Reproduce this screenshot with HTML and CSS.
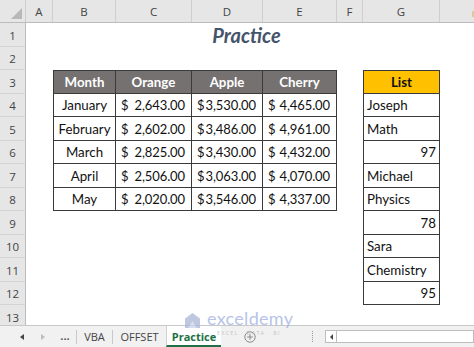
FILE: index.html
```html
<!DOCTYPE html>
<html lang="en">
<head>
    <meta charset="UTF-8">
    <meta name="viewport" content="width=device-width, initial-scale=1.0">
    <title>Practice - Excel</title>
    <link rel="stylesheet" href="styles.css">
</head>
<body>
    <div class="page">
        <div class="sheet">
            <div class="row head">
                <div class="corner"><span class="tri"></span></div>
                <div class="ch">A</div>
                <div class="ch">B</div>
                <div class="ch">C</div>
                <div class="ch">D</div>
                <div class="ch">E</div>
                <div class="ch">F</div>
                <div class="ch">G</div>
                <div class="ch last"><span class="sel"></span></div>
            </div>

            <div class="row">
                <div class="rh">1</div>
                <div class="title">Practice</div>
            </div>
            <div class="row">
                <div class="rh">2</div>
            </div>
            <div class="row">
                <div class="rh">3</div>
                <div class="tc th first">Month</div>
                <div class="tc th">Orange</div>
                <div class="tc th">Apple</div>
                <div class="tc th">Cherry</div>
                <div class="lc lh">List</div>
            </div>
            <div class="row">
                <div class="rh">4</div>
                <div class="tc first">January</div>
                <div class="tc money"><span>$</span><span>2,643.00</span></div>
                <div class="tc money"><span>$</span><span>3,530.00</span></div>
                <div class="tc money"><span>$</span><span>4,465.00</span></div>
                <div class="lc">Joseph</div>
            </div>
            <div class="row">
                <div class="rh">5</div>
                <div class="tc first">February</div>
                <div class="tc money"><span>$</span><span>2,602.00</span></div>
                <div class="tc money"><span>$</span><span>3,486.00</span></div>
                <div class="tc money"><span>$</span><span>4,961.00</span></div>
                <div class="lc">Math</div>
            </div>
            <div class="row">
                <div class="rh">6</div>
                <div class="tc first">March</div>
                <div class="tc money"><span>$</span><span>2,825.00</span></div>
                <div class="tc money"><span>$</span><span>3,430.00</span></div>
                <div class="tc money"><span>$</span><span>4,432.00</span></div>
                <div class="lc num">97</div>
            </div>
            <div class="row">
                <div class="rh">7</div>
                <div class="tc first">April</div>
                <div class="tc money"><span>$</span><span>2,506.00</span></div>
                <div class="tc money"><span>$</span><span>3,063.00</span></div>
                <div class="tc money"><span>$</span><span>4,070.00</span></div>
                <div class="lc">Michael</div>
            </div>
            <div class="row">
                <div class="rh">8</div>
                <div class="tc first">May</div>
                <div class="tc money"><span>$</span><span>2,020.00</span></div>
                <div class="tc money"><span>$</span><span>3,546.00</span></div>
                <div class="tc money"><span>$</span><span>4,337.00</span></div>
                <div class="lc">Physics</div>
            </div>
            <div class="row">
                <div class="rh">9</div>
                <div class="lc num">78</div>
            </div>
            <div class="row">
                <div class="rh">10</div>
                <div class="lc">Sara</div>
            </div>
            <div class="row">
                <div class="rh">11</div>
                <div class="lc">Chemistry</div>
            </div>
            <div class="row">
                <div class="rh">12</div>
                <div class="lc num">95</div>
            </div>
            <div class="row">
                <div class="rh">13</div>
            </div>
        </div>

        <div class="tabbar">
            <div class="nav"><span class="arrow-l"></span></div>
            <div class="nav faded"><span class="arrow-r"></span></div>
            <div class="dots">...</div>
            <div class="sep"></div>
            <div class="tab vba">VBA</div>
            <div class="sep"></div>
            <div class="tab offset">OFFSET</div>
            <div class="tab active">Practice</div>
            <div class="add">
                <svg width="12" height="12" viewBox="0 0 12 12">
                    <circle cx="6" cy="6" r="5.2" fill="none" stroke="#8a8a8a" stroke-width="1"/>
                    <path d="M6 3.2v5.6M3.2 6h5.6" stroke="#8a8a8a" stroke-width="1"/>
                </svg>
            </div>
            <div class="grip"></div>
            <div class="hscroll">
                <div class="sbtn"><span class="arrow-l small"></span></div>
                <div class="track"></div>
            </div>
        </div>

        <div class="watermark">
            <svg class="wm-logo" width="17" height="17" viewBox="0 0 17 17">
                <path d="M8.5 1 L16 6.5 L16 16 L1 16 L1 6.5 Z" fill="#a9b8d8"/>
                <path d="M4.5 16 L8.5 9 L12.5 16 Z" fill="#cbd5ec"/>
            </svg>
            <div class="wm-text">
                <div class="wm-name">exceldemy</div>
                <div class="wm-sub">EXCEL · DATA · BI</div>
            </div>
        </div>
    </div>
</body>
</html>
```

FILE: styles.css
```css
* { box-sizing: border-box; }
html, body { margin: 0; padding: 0; background: #fff; }
body { width: 474px; height: 347px; overflow: hidden; font-family: Lato, "Liberation Sans", sans-serif; }
.page { position: relative; width: 474px; height: 347px; overflow: hidden; }

.sheet { height: 325px; overflow: hidden; }
.row { display: grid; grid-template-columns: 26px 27px 63px 76px 71px 74px 26px 77px 1fr; height: 23.5px; }
.row.head { height: 23px; background: #e6e6e6; border-bottom: 1px solid #bcbcbc; }

.corner { position: relative; border-right: 1px solid #cfcfcf; }
.corner .tri { position: absolute; right: 3px; bottom: 3px; width: 0; height: 0; border-left: 11px solid transparent; border-bottom: 11px solid #b8b8b8; }
.ch { display: flex; align-items: center; justify-content: center; font-family: "Open Sans", sans-serif; font-size: 11.5px; color: #444; border-right: 1px solid #cfcfcf; }
.ch.last { border-right: none; position: relative; }
.ch .sel { position: absolute; right: 0; top: 11px; width: 2px; height: 6px; background: #e3c79a; }

.rh { grid-column: 1; display: flex; align-items: center; justify-content: center; background: #e6e6e6; border-right: 1px solid #bcbcbc; border-bottom: 1px solid #d3d3d3; font-family: "Open Sans", sans-serif; font-size: 11.5px; color: #444; padding-top: 2px; }

.title { grid-column: 3 / 9; text-align: center; font-size: 20px; font-weight: 700; font-style: italic; color: #44546a; line-height: 23px; padding-top: 1px; }

.tc { display: flex; align-items: flex-end; justify-content: center; padding-bottom: 3px; font-size: 13.3px; color: #111; border-right: 1px solid #3a3a3a; border-bottom: 1px solid #3a3a3a; line-height: 16px; }
.tc.first { grid-column: 3; border-left: 1px solid #3a3a3a; }
.tc.th { background: #767171; color: #fff; font-weight: 700; border-top: 1px solid #3a3a3a; }
.tc.money { justify-content: space-between; padding-left: 5px; padding-right: 6px; font-size: 13px; letter-spacing: -0.1px; }

.lc { grid-column: 8; display: flex; align-items: flex-end; padding: 0 3px 3px 3px; font-size: 13.3px; color: #111; line-height: 16px; border-left: 1px solid #3a3a3a; border-right: 1px solid #3a3a3a; border-bottom: 1px solid #3a3a3a; }
.lc.lh { background: #ffc000; justify-content: center; font-weight: 700; border-top: 1px solid #3a3a3a; }
.lc.num { justify-content: flex-end; }

.tabbar { height: 22px; background: #f1f1f1; border-top: 1px solid #c8c8c8; display: flex; align-items: stretch; padding-left: 12px; font-family: "Open Sans", sans-serif; font-size: 11px; color: #444; }
.nav { width: 20px; display: flex; align-items: center; justify-content: center; }
.nav + .nav { width: 22px; }
.nav.faded { opacity: 0.3; }
.arrow-l { width: 0; height: 0; border-top: 3.5px solid transparent; border-bottom: 3.5px solid transparent; border-right: 4px solid #444; }
.arrow-r { width: 0; height: 0; border-top: 3.5px solid transparent; border-bottom: 3.5px solid transparent; border-left: 4px solid #444; }
.arrow-l.small { border-top-width: 3px; border-bottom-width: 3px; border-right-width: 3px; }
.dots { width: 22px; display: flex; align-items: center; justify-content: center; font-weight: 700; color: #555; padding-bottom: 3px; }
.sep { width: 1px; margin: 4px 0 3px; background: #c8c8c8; }
.tab { display: flex; align-items: center; justify-content: center; }
.tab.vba { width: 35px; }
.tab.offset { width: 53px; }
.tab.active { width: 55px; background: #fff; color: #1e7145; font-weight: 700; border-bottom: 2px solid #1e7145; border-left: 1px solid #d0d0d0; padding-top: 1px; }
.add { width: 58px; display: flex; align-items: center; justify-content: center; }
.grip { width: 1px; margin: 5px 0 5px 33px; border-left: 1px dotted #9a9a9a; }
.hscroll { flex: 1; display: flex; align-items: center; margin-left: 12px; }
.sbtn { width: 12px; height: 13px; background: #fff; border: 1px solid #bdbdbd; display: flex; align-items: center; justify-content: center; }
.track { flex: 1; height: 13px; background: #fff; border: 1px solid #bdbdbd; border-left: none; }

.watermark { position: absolute; left: 184px; top: 310px; display: flex; align-items: flex-start; gap: 6px; opacity: 0.75; pointer-events: none; }
.wm-logo { margin-top: 2px; }
.wm-name { font-family: Lato, sans-serif; font-size: 18px; line-height: 17px; color: #9fb0e0; letter-spacing: 0.3px; }
.wm-sub { font-family: "Open Sans", sans-serif; font-size: 5.5px; line-height: 7px; color: #b5b5b5; letter-spacing: 1.2px; margin: 3px 0 0 10px; }
```
